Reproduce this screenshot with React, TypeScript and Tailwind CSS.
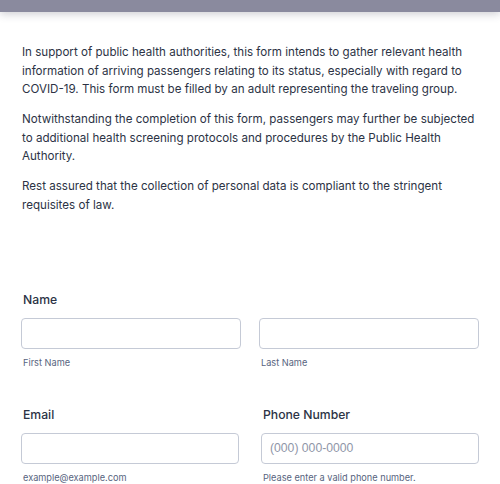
const font = { fontFamily: 'Inter, "Noto Sans", sans-serif' };

const Input = ({ placeholder }: { placeholder?: string }) => (
  <input
    type="text"
    placeholder={placeholder}
    className="block h-[31px] w-full rounded-[4px] border border-[#c5cad6] bg-white px-[8px] font-['Liberation_Sans',Arial,sans-serif] text-[12.2px] text-[#2c3345] outline-none placeholder:text-[#8f96a8]"
  />
);

const SubLabel = ({ children }: { children: string }) => (
  <p className="mt-[7px] pl-[2px] text-[9.2px] leading-[14px] text-[#57647e]">{children}</p>
);

const Label = ({ children }: { children: string }) => (
  <p className="mb-[8px] pl-[2px] text-[12.2px] font-medium leading-[20px] text-[#2c3345]">{children}</p>
);

export default function App() {
  return (
    <div className="h-[484px] w-[500px] overflow-hidden bg-white" style={font}>
      <div className="h-[12px] bg-[#8a8a9e] shadow-[0_2px_8px_rgba(60,60,80,0.25)]" />
      <div className="px-[22px] pt-[31px] text-[11.6px] leading-[18.6px] text-[#2c3345]">
        <p>
          In support of public health authorities, this form intends to gather relevant health
          information of arriving passengers relating to its status, especially with regard to
          COVID-19. This form must be filled by an adult representing the traveling group.
        </p>
        <p className="mt-[11.4px]">
          Notwithstanding the completion of this form, passengers may further be subjected to
          additional health screening protocols and procedures by the Public Health Authority.
        </p>
        <p className="mt-[11.4px]">
          Rest assured that the collection of personal data is compliant to the stringent
          requisites of law.
        </p>
      </div>

      <div className="mt-[75px] px-[21px]">
        <Label>Name</Label>
        <div className="grid grid-cols-2 gap-[18px]">
          <div>
            <Input />
            <SubLabel>First Name</SubLabel>
          </div>
          <div>
            <Input />
            <SubLabel>Last Name</SubLabel>
          </div>
        </div>
      </div>

      <div className="mt-[35px] grid grid-cols-2 gap-[22px] px-[21px]">
        <div>
          <Label>Email</Label>
          <Input />
          <SubLabel>example@example.com</SubLabel>
        </div>
        <div>
          <Label>Phone Number</Label>
          <Input placeholder="(000) 000-0000" />
          <SubLabel>Please enter a valid phone number.</SubLabel>
        </div>
      </div>
    </div>
  );
}
